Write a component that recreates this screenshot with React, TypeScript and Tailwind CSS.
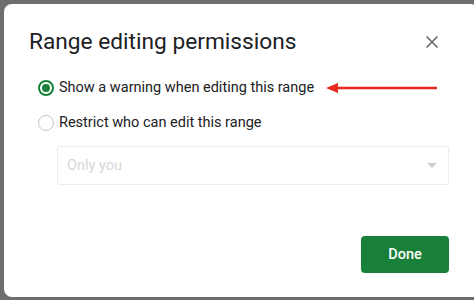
export default function App() {
  return (
    <div className="w-[474px] h-[300px] bg-[#6e6e6e] pt-[4px] pl-[4px] pb-[3px] overflow-hidden" style={{ fontFamily: "Roboto, Arial, sans-serif" }}>
      <div className="h-full bg-white rounded-l-[8px] rounded-tr-[2px] flex flex-col pl-[26px] pr-[25px]">
        {/* Header */}
        <div className="flex items-center justify-between pt-[24px]">
          <h1 className="text-[22.7px] leading-[28px] text-[#202124] ml-[-1px]">Range editing permissions</h1>
          <button className="w-[24px] h-[24px] flex items-center justify-center text-[#5f6368] mr-[5px]" aria-label="Close">
            <svg width="12" height="12" viewBox="0 0 12 12" fill="none" stroke="currentColor" strokeWidth="1.5">
              <path d="M0.5 0.5L11.5 11.5M11.5 0.5L0.5 11.5" />
            </svg>
          </button>
        </div>

        {/* Options */}
        <div className="flex flex-col mt-[20px]">
          <label className="flex items-center h-[24px]">
            <span className="w-[16px] h-[16px] rounded-full border-2 border-[#188038] flex items-center justify-center ml-[8px]">
              <span className="w-[8px] h-[8px] rounded-full bg-[#188038]" />
            </span>
            <span className="ml-[5px] text-[14.5px] text-[#202124]">Show a warning when editing this range</span>
            <svg className="ml-[12px]" width="112" height="12" viewBox="0 0 112 12">
              <path d="M0 6L12 1V4.8H111V7.2H12V11Z" fill="#e8291c" />
            </svg>
          </label>
          <label className="flex items-center h-[24px] mt-[11px]">
            <span className="w-[16px] h-[16px] rounded-full border border-[#c4c4c4] ml-[8px]" />
            <span className="ml-[5px] text-[14.5px] text-[#202124]">Restrict who can edit this range</span>
          </label>
          <div className="ml-[27px] mt-[11px] h-[39px] border border-[#ececec] rounded-[2px] flex items-center justify-between pl-[9px] pr-[11px]">
            <span className="text-[14.5px] text-[#d6d6d6]">Only you</span>
            <svg width="10" height="5" viewBox="0 0 10 5">
              <path d="M0 0L5 5L10 0Z" fill="#cfcfcf" />
            </svg>
          </div>
        </div>

        {/* Footer */}
        <div className="flex justify-end mt-auto mb-[24px]">
          <button className="w-[88px] h-[37px] rounded-[4px] bg-[#188038] text-white text-[14.5px] font-medium">Done</button>
        </div>
      </div>
    </div>
  );
}
